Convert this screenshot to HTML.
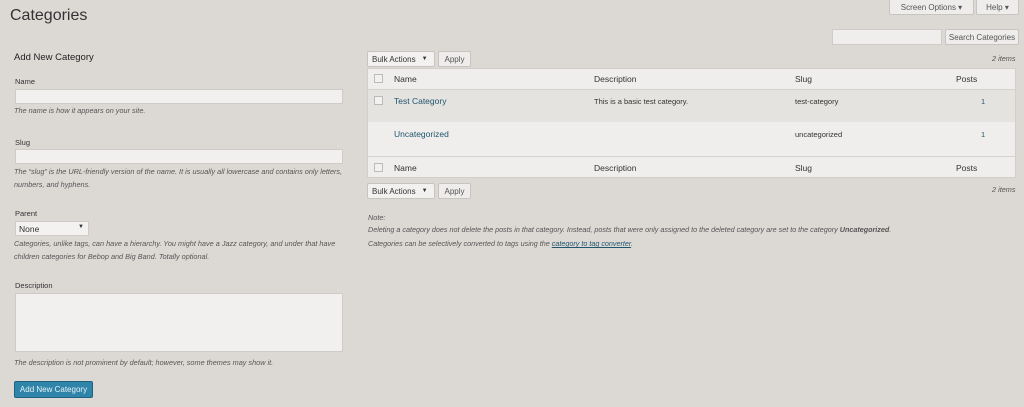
<!DOCTYPE html>
<html><head><style>
*{box-sizing:border-box;margin:0;padding:0}
body{width:1024px;height:407px;background:#dcd9d5;font-family:"Liberation Sans",sans-serif;color:#333;position:relative;overflow:hidden;font-size:8px}
.a{position:absolute}
h1{position:absolute;left:10px;top:7px;font-weight:normal;font-size:16px;color:#333}
.btn{position:absolute;background:#eeedeb;border:1px solid #c8c5c1;font-size:8px;color:#555;display:flex;align-items:center;justify-content:center;border-radius:2px}
.inp{position:absolute;background:#f1f0ee;border:1px solid #cfccc8}
.lbl{position:absolute;font-size:7.5px;color:#333}
.hint{position:absolute;font-size:7.3px;font-style:italic;color:#555;line-height:13px}
.cb{position:absolute;width:9px;height:9px;border:1px solid #bbb;background:#f2f1ef}
.lnk{color:#21566e}
</style></head><body>
<h1>Categories</h1>
<div class="btn" style="left:889px;top:0;width:85px;height:15px;border-top:none">Screen Options ▾</div>
<div class="btn" style="left:976px;top:0;width:43px;height:15px;border-top:none">Help ▾</div>
<div class="inp" style="left:832px;top:29px;width:110px;height:16px;background:#efeeec"></div>
<div class="btn" style="left:945px;top:29px;width:74px;height:16px">Search Categories</div>

<div class="a" style="left:14px;top:52px;font-size:9.5px;color:#222">Add New Category</div>
<div class="lbl" style="left:15px;top:77px">Name</div>
<div class="inp" style="left:15px;top:89px;width:328px;height:15px"></div>
<div class="hint" style="left:14px;top:104px">The name is how it appears on your site.</div>
<div class="lbl" style="left:15px;top:138px">Slug</div>
<div class="inp" style="left:15px;top:149px;width:328px;height:15px"></div>
<div class="hint" style="left:14px;top:165px;width:340px">The “slug” is the URL-friendly version of the name. It is usually all lowercase and contains only letters, numbers, and hyphens.</div>
<div class="lbl" style="left:15px;top:209px">Parent</div>
<div class="inp" style="left:15px;top:221px;width:74px;height:15px;font-size:8.5px;padding:2px 3px;background:#f3f2f0">None<span style="position:absolute;right:4px;top:2px;font-size:6px">▼</span></div>
<div class="hint" style="left:14px;top:237px;width:340px">Categories, unlike tags, can have a hierarchy. You might have a Jazz category, and under that have children categories for Bebop and Big Band. Totally optional.</div>
<div class="lbl" style="left:15px;top:281px">Description</div>
<div class="inp" style="left:15px;top:293px;width:328px;height:59px"></div>
<div class="hint" style="left:14px;top:356px">The description is not prominent by default; however, some themes may show it.</div>
<div class="btn" style="left:14px;top:381px;width:79px;height:17px;background:#2e84a9;border-color:#1f6180;color:#e8f2f6">Add New Category</div>

<div class="btn" style="left:367px;top:51px;width:68px;height:16px;background:#f2f1ef;color:#333;justify-content:flex-start;padding-left:4px">Bulk Actions <span style="font-size:6px;margin-left:6px">▼</span></div>
<div class="btn" style="left:438px;top:51px;width:33px;height:16px">Apply</div>
<div class="hint" style="left:992px;top:52px">2 items</div>

<div class="a" style="left:367px;top:68px;width:649px;height:110px;background:#efeeec;border:1px solid #d2cfcb"></div>
<div class="a" style="left:368px;top:89px;width:647px;height:33px;background:#e5e3e0;border-top:1px solid #d6d3cf"></div>
<div class="a" style="left:368px;top:156px;width:647px;height:1px;background:#d6d3cf"></div>
<div class="cb" style="left:374px;top:74px"></div>
<div class="a" style="left:394px;top:74px;font-size:8.5px">Name</div>
<div class="a" style="left:594px;top:74px;font-size:8.5px">Description</div>
<div class="a" style="left:795px;top:74px;font-size:8.5px">Slug</div>
<div class="a" style="left:956px;top:74px;font-size:8.5px">Posts</div>
<div class="cb" style="left:374px;top:96px"></div>
<div class="a lnk" style="left:394px;top:96px;font-size:8.5px">Test Category</div>
<div class="a" style="left:594px;top:97px;font-size:7.5px">This is a basic test category.</div>
<div class="a" style="left:795px;top:97px;font-size:7.5px">test-category</div>
<div class="a lnk" style="left:981px;top:97px;font-size:7.5px">1</div>
<div class="a lnk" style="left:394px;top:129px;font-size:8.5px">Uncategorized</div>
<div class="a" style="left:795px;top:130px;font-size:7.5px">uncategorized</div>
<div class="a lnk" style="left:981px;top:130px;font-size:7.5px">1</div>
<div class="cb" style="left:374px;top:163px"></div>
<div class="a" style="left:394px;top:163px;font-size:8.5px">Name</div>
<div class="a" style="left:594px;top:163px;font-size:8.5px">Description</div>
<div class="a" style="left:795px;top:163px;font-size:8.5px">Slug</div>
<div class="a" style="left:956px;top:163px;font-size:8.5px">Posts</div>

<div class="btn" style="left:367px;top:183px;width:68px;height:16px;background:#f2f1ef;color:#333;justify-content:flex-start;padding-left:4px">Bulk Actions <span style="font-size:6px;margin-left:6px">▼</span></div>
<div class="btn" style="left:438px;top:183px;width:33px;height:16px">Apply</div>
<div class="hint" style="left:992px;top:183px">2 items</div>

<div class="hint" style="left:368px;top:211px">Note:</div>
<div class="hint" style="left:368px;top:223px;font-size:7.2px">Deleting a category does not delete the posts in that category. Instead, posts that were only assigned to the deleted category are set to the category <b>Uncategorized</b>.</div>
<div class="hint" style="left:368px;top:237px;font-size:7.2px">Categories can be selectively converted to tags using the <span class="lnk" style="text-decoration:underline">category to tag converter</span>.</div>
</body></html>
